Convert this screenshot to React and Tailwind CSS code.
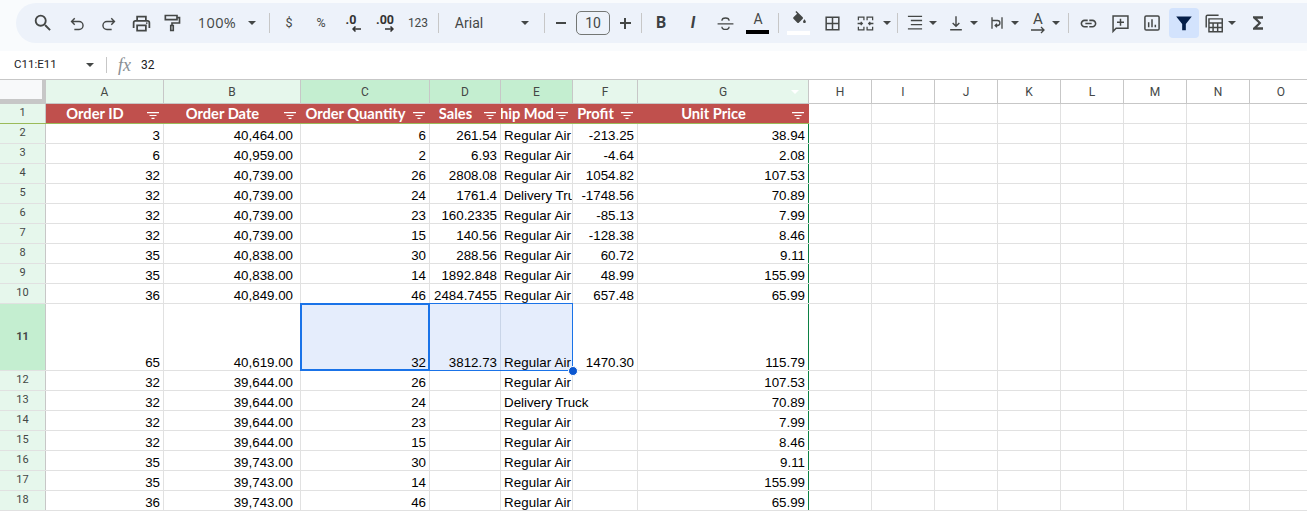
import React from "react";

const Ic = ({ size = 20, children, stroke = false, sw = 1.8 }) => (
  <svg width={size} height={size} viewBox="0 0 24 24" fill={stroke ? "none" : "currentColor"} stroke={stroke ? "currentColor" : "none"} strokeWidth={stroke ? sw : 0}>
    {children}
  </svg>
);

const Item = ({ cls, children }) => (
  <span className={"flex shrink-0 items-center justify-center " + cls}>{children}</span>
);
const Caret = ({ cls }) => (
  <span className={"flex w-[10px] shrink-0 justify-center " + cls}>
    <span className="h-0 w-0 border-x-[4px] border-t-[4px] border-x-transparent border-t-[#444746]" />
  </span>
);
const Sep = ({ cls }) => <span className={"h-5 w-px shrink-0 bg-[#c7c7c7] " + cls} />;

const Arrow = ({ dir }) => (
  <svg width="9" height="6" viewBox="0 0 9 6" className="absolute bottom-[3px] right-[3px]" fill="none" stroke="currentColor" strokeWidth="1.5">
    {dir === "l" ? <path d="M9 3H1M3.500.5 1 3l2.500 2.500" /> : <path d="M0 3h8M5.500.5 8 3 5.500 5.500" />}
  </svg>
);

function Toolbar() {
  return (
    <div className="h-[51px] bg-[#f9fbfd] pt-[3px] pl-4">
      <div className="flex h-10 items-center rounded-l-[20px] bg-[#edf2fa] text-[#444746]">
        <Item cls="ml-[15px] w-6">
          <Ic size={22}><path d="M15.500 14h-.79l-.28-.27A6.471 6.471 0 0 0 16 9.500 6.500 6.500 0 1 0 9.500 16c1.610 0 3.090-.59 4.230-1.570l.27.28v.79l5 4.990L20.490 19l-4.990-5zm-6 0C7.010 14 5 11.990 5 9.500S7.010 5 9.500 5 14 7.010 14 9.500 11.990 14 9.500 14z" /></Ic>
        </Item>
        <Item cls="ml-[10px] w-6">
          <Ic stroke size={19}><path d="M8.500 5.500 4.500 9.500l4 4M4.500 9.500H14a5 5 0 0 1 0 10H8" /></Ic>
        </Item>
        <Item cls="ml-[7px] w-6">
          <Ic stroke size={19}><path d="M15.500 5.500l4 4-4 4M19.500 9.500H10a5 5 0 0 0 0 10h6" /></Ic>
        </Item>
        <Item cls="ml-[9px] w-6">
          <Ic size={21}>
            <path d="M19 8h-1V3H6v5H5c-1.660 0-3 1.340-3 3v6h4v4h12v-4h4v-6c0-1.660-1.340-3-3-3zM8 5h8v3H8V5zm8 14H8v-4h8v4zm2-2v-4H6v4H4v-6c0-.55.45-1 1-1h14c.55 0 1 .45 1 1v6h-2z" />
            <circle cx="18" cy="11.500" r="1" />
          </Ic>
        </Item>
        <Item cls="ml-[7px] w-6">
          <Ic stroke size={20} sw={2}><path d="M4 3h14v5H4zM18 5.500h3V12h-9v3M10.500 15h3v6h-3z" /></Ic>
        </Item>
        <Item cls="ml-[14px] w-[38px] text-[14.5px] tracking-[0.4px] font-['Open_Sans',sans-serif]">100%</Item>
        <Caret cls="ml-[11px]" />
        <Sep cls="ml-3" />
        <Item cls="ml-[7px] w-6 text-[12.5px] font-['Roboto',sans-serif]">$</Item>
        <Item cls="ml-2 w-6 text-[12.5px] font-['Roboto',sans-serif]">%</Item>
        <Item cls="relative ml-[7px] h-6 w-6 pb-1.5 pr-0.5 text-[12.5px] font-bold text-[#333] font-['Roboto',sans-serif]">
          .0<Arrow dir="l" />
        </Item>
        <Item cls="relative ml-[9px] h-6 w-6 pb-1.5 text-[12.5px] font-bold text-[#333] font-['Roboto',sans-serif]">
          .00<Arrow dir="r" />
        </Item>
        <Item cls="ml-[9px] w-6 text-[12px] font-['Roboto',sans-serif]">123</Item>
        <Sep cls="ml-2" />
        <Item cls="ml-[15px] w-[30px] text-[14px] font-['Roboto',sans-serif]">Arial</Item>
        <Caret cls="ml-9" />
        <Sep cls="ml-3.5" />
        <Item cls="ml-2 w-4"><span className="h-[1.5px] w-[10px] bg-[#444746]" /></Item>
        <Item cls="ml-[7px] h-6 w-[34px] rounded-[5px] border border-[#747775] text-[14px] font-['Roboto',sans-serif]">10</Item>
        <Item cls="relative ml-[7px] h-4 w-4">
          <span className="h-[1.5px] w-[11px] bg-[#444746]" />
          <span className="absolute left-[7px] top-[2.500px] h-[11px] w-[1.5px] bg-[#444746]" />
        </Item>
        <Sep cls="ml-2" />
        <Item cls="ml-[7px] w-6 text-[16px] font-bold text-[#3c4043] font-['Roboto',sans-serif]">B</Item>
        <Item cls="ml-2 w-6 text-[16px] font-bold italic text-[#3c4043] font-['Roboto',sans-serif]">I</Item>
        <Item cls="ml-2 w-6">
          <Ic stroke size={19} sw={1.7}><path d="M7.500 8.500C7.500 6 9.500 5 12 5s4.500 1 4.500 3.500M2 12.500h20M7.500 16c0 2.500 2 3.500 4.500 3.500s4.500-1 4.500-3.500" /></Ic>
        </Item>
        <Item cls="relative ml-[9px] h-6 w-6 pb-[7px] text-[14px] font-['Roboto',sans-serif]">
          A<span className="absolute bottom-[1px] left-0 h-1 w-[23px] bg-black" />
        </Item>
        <Sep cls="ml-2" />
        <Item cls="relative ml-2 h-7 w-6 pb-2">
          <Ic size={17}><path d="M16.560 8.940L7.620 0 6.210 1.410l2.380 2.380-5.150 5.150c-.59.59-.59 1.540 0 2.120l5.500 5.500c.29.29.68.44 1.060.44s.77-.15 1.060-.44l5.500-5.500c.59-.58.59-1.530 0-2.120zM19 11.500s-2 2.170-2 3.500c0 1.100.9 2 2 2s2-.9 2-2c0-1.330-2-3.500-2-3.500z" /></Ic>
          <span className="absolute bottom-[2px] left-0 h-1 w-[23px] bg-white" />
        </Item>
        <Item cls="ml-[9px] w-6">
          <Ic stroke size={19} sw={1.9}><path d="M4 4h16v16H4zM12 4v16M4 12h16" /></Ic>
        </Item>
        <Item cls="ml-[9px] w-6">
          <Ic stroke size={19} sw={1.6}><path d="M3 8V4h7v4M3 16v4h7v-4M21 8V4h-7v4M21 16v4h-7v-4M2 12h6M6 10l2 2-2 2M22 12h-6M18 10l-2 2 2 2" /></Ic>
        </Item>
        <Caret cls="ml-[5px]" />
        <Sep cls="ml-[5px]" />
        <Item cls="ml-[5px] w-6">
          <Ic stroke size={20} sw={1.6}><path d="M3.500 4h17M7 9h13.500M7 14h13.500M3.500 19h17" /></Ic>
        </Item>
        <Caret cls="ml-px" />
        <Item cls="ml-1.5 w-6">
          <Ic stroke size={20} sw={1.7}><path d="M5 20h14M12 4v12M8 12l4 4 4-4" /></Ic>
        </Item>
        <Caret cls="ml-px" />
        <Item cls="ml-1.5 w-6">
          <Ic stroke size={20} sw={1.6}><path d="M6 5v14M18 5v14M6 9h6.500a3 3 0 0 1 0 6H10M12 12.800 9.800 15l2.200 2.200" /></Ic>
        </Item>
        <Caret cls="ml-px" />
        <Item cls="relative ml-1.5 h-6 w-6 pb-[7px] text-[15px] font-['Roboto',sans-serif]">
          A
          <svg width="14" height="8" viewBox="0 0 14 8" className="absolute bottom-[1px] left-[5px]" fill="none" stroke="currentColor" strokeWidth="1.300"><path d="M0 4h13M10 1l3 3-3 3" /></svg>
        </Item>
        <Caret cls="ml-px" />
        <Sep cls="ml-[7px]" />
        <Item cls="ml-[7px] w-6">
          <Ic size={19}><path d="M17 7h-4v2h4c1.650 0 3 1.350 3 3s-1.350 3-3 3h-4v2h4c2.760 0 5-2.240 5-5s-2.240-5-5-5zm-6 8H7c-1.650 0-3-1.350-3-3s1.350-3 3-3h4V7H7c-2.760 0-5 2.240-5 5s2.240 5 5 5h4v-2zm-3-4h8v2H8z" /></Ic>
        </Item>
        <Item cls="ml-2 w-6">
          <Ic stroke size={21} sw={1.700}><path d="M3.500 3.500h17v14H7l-3.500 3.500zM12 6.500v8M8 10.500h8" /></Ic>
        </Item>
        <Item cls="ml-2 w-6">
          <Ic stroke size={20} sw={1.800}><path d="M5 3.500h14a1.500 1.500 0 0 1 1.500 1.500v14a1.500 1.500 0 0 1-1.500 1.500H5A1.500 1.500 0 0 1 3.500 19V5A1.500 1.500 0 0 1 5 3.500zM8 11v6M12 7.500V17M16 14v3" /></Ic>
        </Item>
        <Item cls="ml-[5px] h-[30px] w-[30px] rounded bg-[#d3e3fd] text-[#041e49]">
          <Ic size={22}><path d="M3.500 5h17l-6.500 8v7h-4v-7z" /></Ic>
        </Item>
        <Item cls="ml-[3px] w-6">
          <Ic stroke size={22} sw={1.600}><path d="M3.500 17V5a1.500 1.500 0 0 1 1.500-1.500h12M6.500 7.500h14.500v14H6.500zM6.500 12h14.500M6.500 17h14.500M11 12v9.500M16 12v9.500" /></Ic>
        </Item>
        <Caret cls="ml-px" />
        <Item cls="ml-[9px] w-6">
          <Ic size={20}><path d="M18 4H6v2l6.500 6L6 18v2h12v-3h-7l5-5-5-5h7z" /></Ic>
        </Item>
      </div>
    </div>
  );
}

function FormulaBar() {
  return (
    <div className="flex h-7 items-center bg-white pl-3.5 text-[12px] text-[#202124] font-['Roboto',sans-serif]">
      <span className="w-[71px] text-[11.5px]">C11:E11</span>
      <Caret cls="" />
      <span className="ml-[11px] h-4 w-px bg-[#c7c7c7]" />
      <span className="ml-[11px] w-[23px] text-[18px] italic leading-none text-[#8a8f94] font-['Liberation_Serif',serif]">fx</span>
      <span>32</span>
    </div>
  );
}

const COLS = [
  ["A", "w-[118px]"], ["B", "w-[137px]"], ["C", "w-[129px]"], ["D", "w-[71px]"], ["E", "w-[72px]"], ["F", "w-[65px]"], ["G", "w-[171px]"],
  ["H", "w-[63px]"], ["I", "w-[63px]"], ["J", "w-[63px]"], ["K", "w-[63px]"], ["L", "w-[63px]"], ["M", "w-[63px]"], ["N", "w-[63px]"], ["O", "w-[63px]"],
];
const HEADS = ["Order ID", "Order Date", "Order Quantity", "Sales", "Ship Mode", "Profit", "Unit Price"];
const RA = "Regular Air";
const ROWS = [
  [3, "40,464.00", 6, "261.54", RA, "-213.25", "38.94"],
  [6, "40,959.00", 2, "6.93", RA, "-4.64", "2.08"],
  [32, "40,739.00", 26, "2808.08", RA, "1054.82", "107.53"],
  [32, "40,739.00", 24, "1761.4", "Delivery Truck", "-1748.56", "70.89"],
  [32, "40,739.00", 23, "160.2335", RA, "-85.13", "7.99"],
  [32, "40,739.00", 15, "140.56", RA, "-128.38", "8.46"],
  [35, "40,838.00", 30, "288.56", RA, "60.72", "9.11"],
  [35, "40,838.00", 14, "1892.848", RA, "48.99", "155.99"],
  [36, "40,849.00", 46, "2484.7455", RA, "657.48", "65.99"],
  [65, "40,619.00", 32, "3812.73", RA, "1470.30", "115.79"],
  [32, "39,644.00", 26, "", RA, "", "107.53"],
  [32, "39,644.00", 24, "", "Delivery Truck", "", "70.89"],
  [32, "39,644.00", 23, "", RA, "", "7.99"],
  [32, "39,644.00", 15, "", RA, "", "8.46"],
  [35, "39,743.00", 30, "", RA, "", "9.11"],
  [35, "39,743.00", 14, "", RA, "", "155.99"],
  [36, "39,743.00", 46, "", RA, "", "65.99"],
];

const FilterIcon = () => (
  <svg width="12" height="7" viewBox="0 0 12 7" className="absolute right-[5px] top-[8px]" stroke="white" strokeWidth="1.200">
    <path d="M0 .6h12M2.500 3.500h7M4.500 6.400h3" />
  </svg>
);

function ColumnHeader() {
  return (
    <div className="flex h-[25px] border-y border-[#c7c7c7] text-[12px] text-[#444746] font-['Roboto',sans-serif]">
      <div className="h-full w-[46px] shrink-0 border-r-4 border-b-4 border-[#c7c7c7] bg-[#f8f9fa]" />
      {COLS.map(([c, w], i) => (
        <div
          key={c}
          className={
            "relative flex shrink-0 items-center justify-center border-r border-[#c7c7c7] " + w + " " +
            (i >= 2 && i <= 4 ? "bg-[#c4eed0]" : i < 7 ? "bg-[#e6f7ec]" : "bg-white")
          }
        >
          {c}
          {c === "G" && (
            <span className="absolute right-[9px] top-[10px] h-0 w-0 border-x-[4px] border-t-[4px] border-x-transparent border-t-white" />
          )}
        </div>
      ))}
    </div>
  );
}

function HeaderRow() {
  return (
    <div className="flex h-5 border-b border-[#9bbb59]">
      <RowNum n={1} />
      {COLS.map(([c, w], i) =>
        i < 7 ? (
          <div key={c} className={"relative flex shrink-0 justify-center overflow-hidden bg-[#c0504d] pr-5 " + w}>
            <span className="flex h-full items-center justify-center overflow-hidden whitespace-nowrap text-[14.67px] font-bold leading-[19px] text-white font-['Lato',sans-serif]">
              {HEADS[i]}
            </span>
            <FilterIcon />
          </div>
        ) : (
          <div key={c} className={"-mb-px shrink-0 border-r border-b border-[#e1e1e1] " + w} />
        )
      )}
    </div>
  );
}

function RowNum({ n, tall }) {
  return (
    <div
      className={
        "flex w-[46px] shrink-0 items-center justify-center border-r border-[#c7c7c7] text-[11px] text-[#444746] font-['Roboto',sans-serif] " +
        (tall ? "bg-[#c4eed0] font-bold" : "bg-[#e6f7ec]")
      }
    >
      {n}
    </div>
  );
}

function Row({ data, n }) {
  const tall = n === 11;
  return (
    <div className={"flex border-b border-[#e1e1e1] " + (tall ? "h-[67px]" : "h-5")}>
      <RowNum n={n} tall={tall} />
      {COLS.map(([c, w], i) => {
        const v = i < 7 ? data[i] : "";
        const left = i === 4;
        const spill = left && n === 13;
        const sel = tall && i >= 2 && i <= 4;
        return (
          <div
            key={c}
            className={
              "flex shrink-0 items-end whitespace-nowrap pl-[3px] text-[13.33px] leading-[15px] text-black font-['Liberation_Sans',sans-serif] " + w + " " +
              (i === 1 ? "pr-[7px] " : "pr-[3px] ") +
              (left ? "justify-start " : "justify-end ") +
              (spill ? "overflow-visible border-r border-r-white " : "overflow-hidden border-r ") +
              (i === 6 ? "border-r-[#0b8043] " : spill ? "" : sel ? "border-r-[#c9d5e8] " : "border-r-[#e1e1e1] ") +
              (sel ? "bg-[#e5edfc]" : "")
            }
          >
            {left && v === RA ? <span className="tracking-[0.1px]">{v}</span> : v}
          </div>
        );
      })}
    </div>
  );
}

export default function App() {
  return (
    <div className="relative h-[512px] w-[1307px] overflow-hidden bg-white">
      <Toolbar />
      <FormulaBar />
      <ColumnHeader />
      <HeaderRow />
      {ROWS.map((r, i) => (
        <Row key={i} data={r} n={i + 2} />
      ))}
      <div className="absolute left-[300px] top-[303px] h-[68px] w-[273px] border border-[#1a73e8]" />
      <div className="absolute left-[300px] top-[303px] h-[68px] w-[130px] border-2 border-[#1a73e8]" />
      <div className="absolute left-[568px] top-[366px] h-[10px] w-[10px] rounded-full border border-white bg-[#0b57d0]" />
    </div>
  );
}
